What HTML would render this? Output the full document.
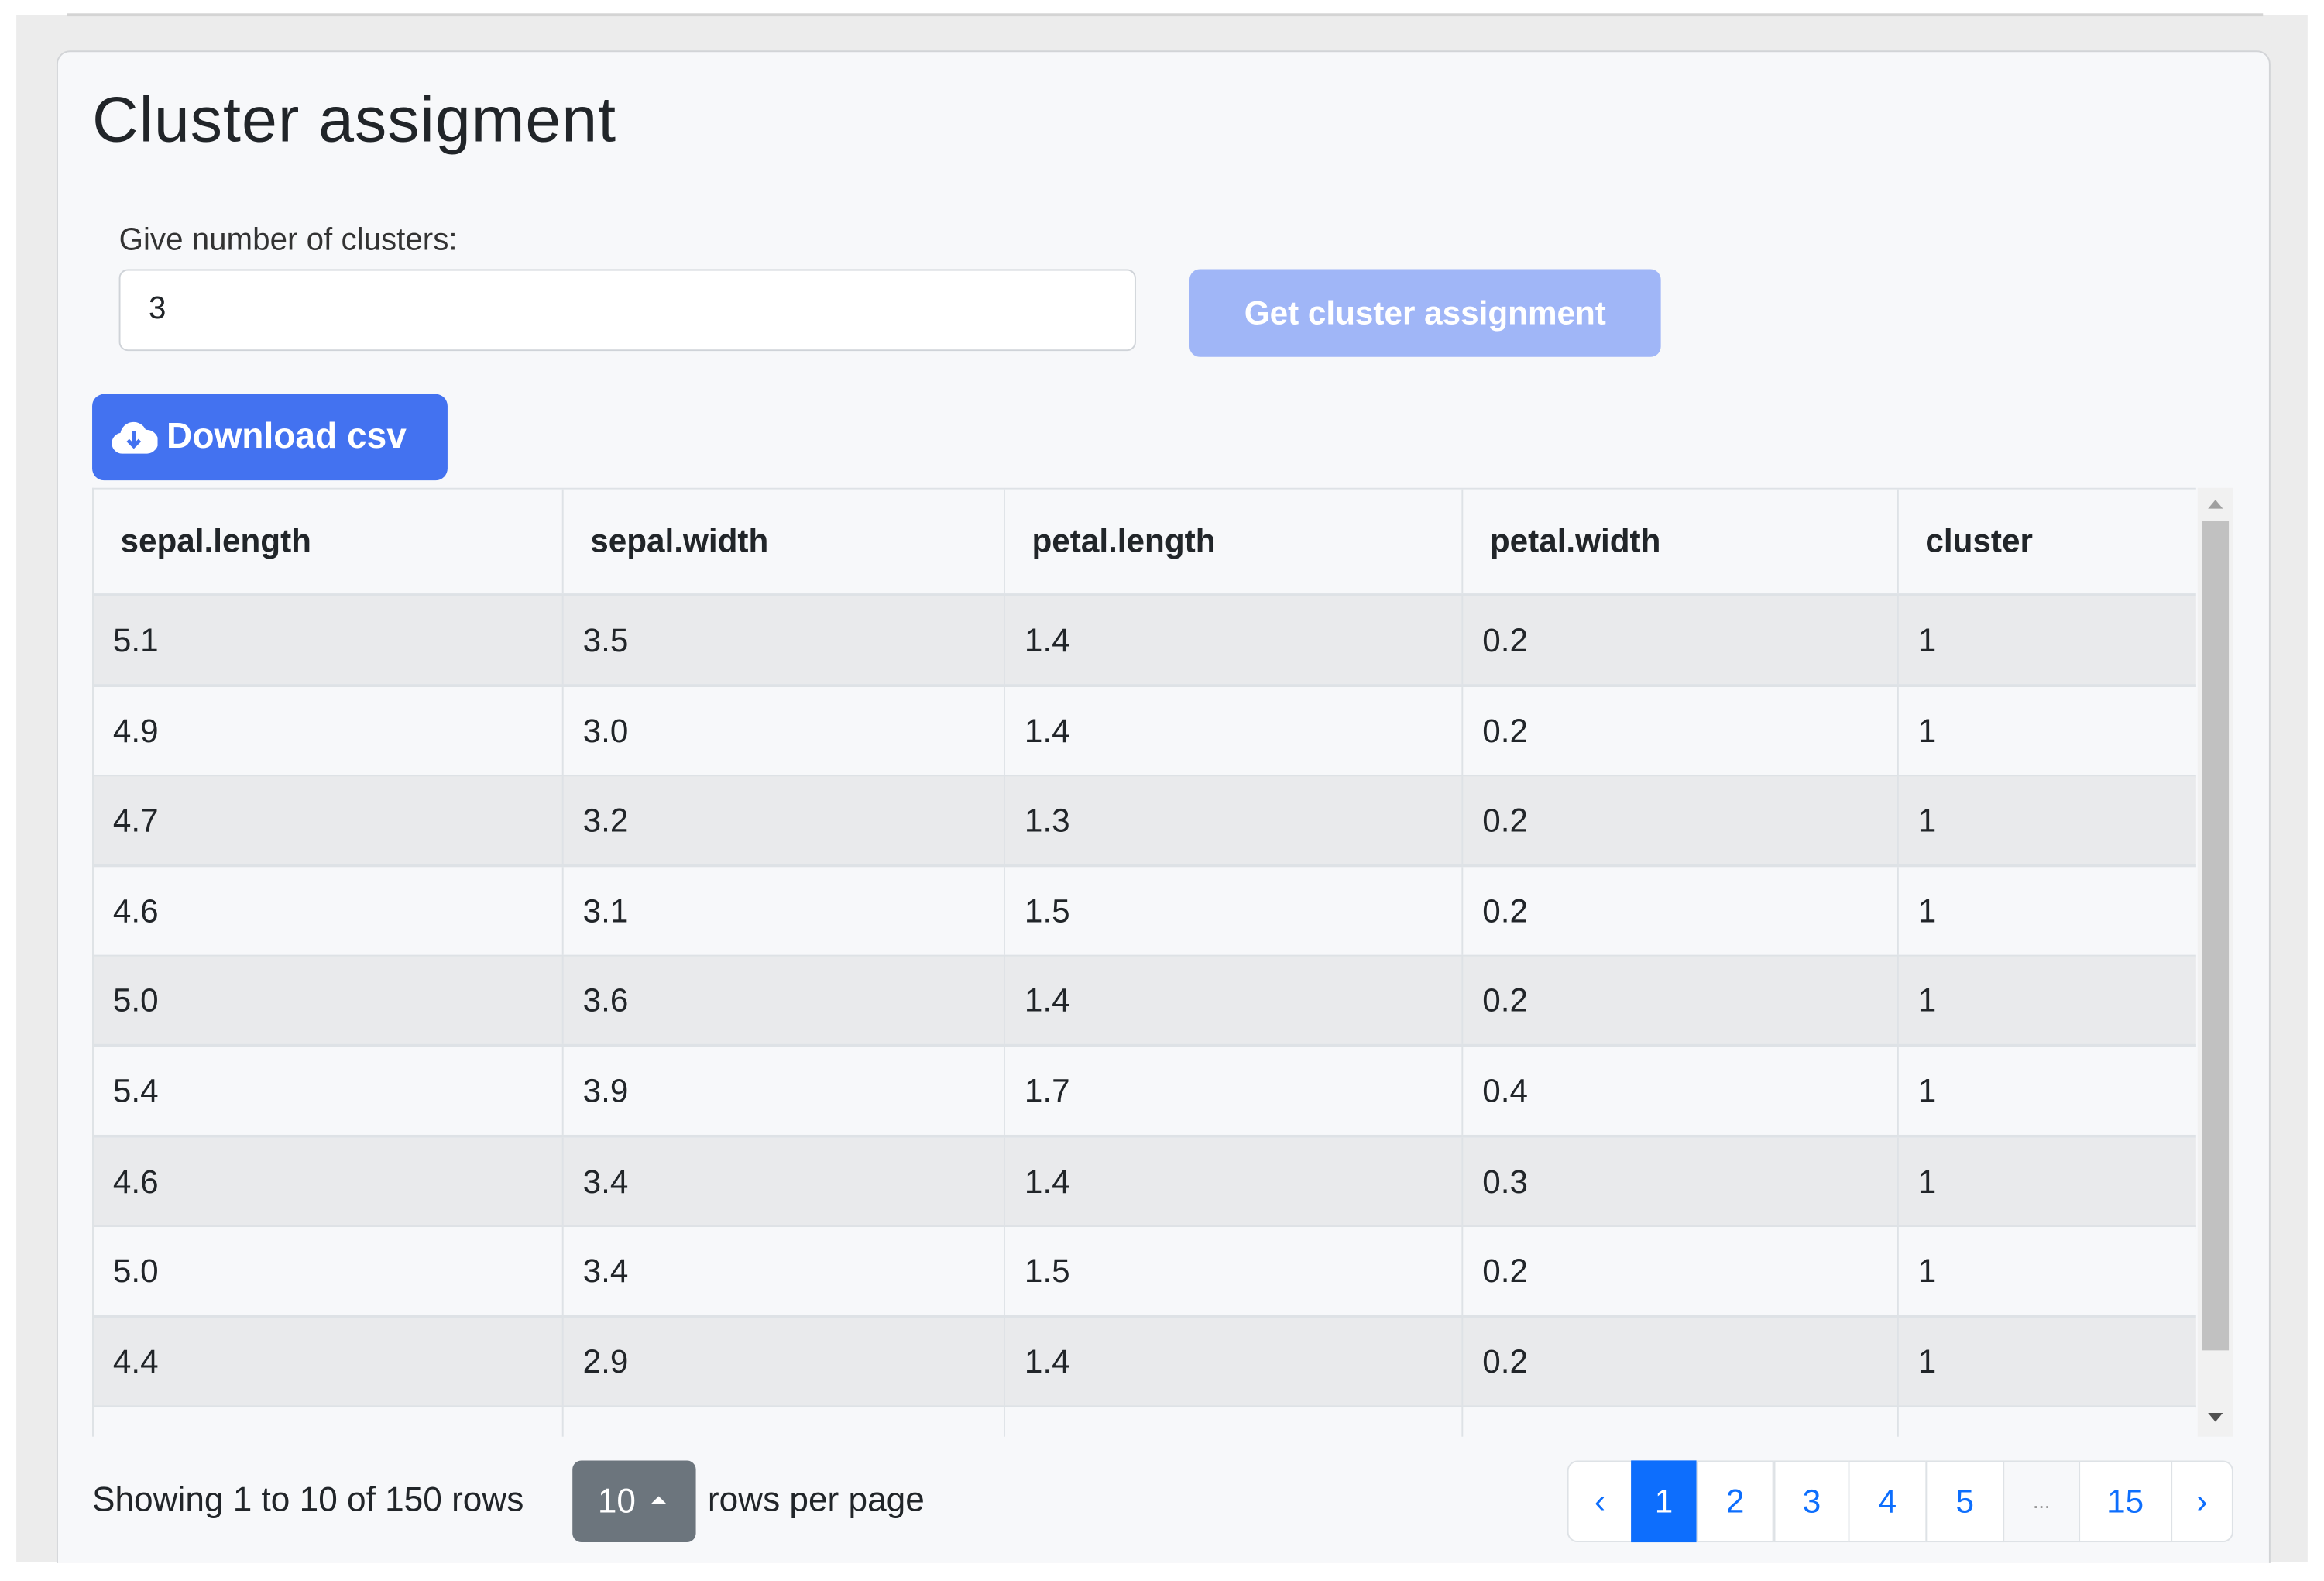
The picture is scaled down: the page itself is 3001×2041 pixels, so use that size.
<!DOCTYPE html>
<html><head><meta charset="utf-8"><style>
html,body{margin:0;padding:0;background:#fff;overflow:hidden}
body{width:3001px;height:2041px;position:relative}
#w{position:absolute;left:0;top:0;width:1563px;height:1063px;transform:scale(1.92);transform-origin:0 0;font-family:"Liberation Sans",sans-serif;color:#212529}
.a{position:absolute}
.bg{left:11px;top:10px;width:1541px;height:1040px;background:#ececec}
.tl{left:45px;top:9px;width:1477px;height:2px;background:#d4d4d4}
.card{left:38px;top:34px;width:1489px;height:1040px;background:#f7f8fa;border:1px solid #d2d4d7;border-radius:9px;box-sizing:border-box}
h1{position:absolute;left:62px;top:57px;margin:0;font-size:43px;font-weight:400;letter-spacing:0.5px}
.lbl{left:80px;top:150px;font-size:21px;color:#333}
.inp{left:80px;top:181px;width:684px;height:55px;background:#fff;border:1px solid #cfd3d8;border-radius:6px;box-sizing:border-box;font-size:21px;padding:14px 0 0 19px}
.gb{left:800px;top:181px;width:317px;height:59px;background:#a0b6f7;border-radius:7px;color:#fff;font-size:22px;font-weight:bold;line-height:59px;text-align:center}
.db{left:62px;top:265px;width:239px;height:58px;background:#4372f0;border-radius:8px;color:#fff;font-size:24px;font-weight:bold;line-height:58px}
.tbl{left:62px;top:328px;width:1415px;height:638px;overflow:hidden;border-left:1px solid #dee2e6;border-top:1px solid #dee2e6;box-sizing:border-box}
.row{position:absolute;left:0;width:1415px;border-bottom:2px solid #dee2e6;box-sizing:border-box}
.c{position:absolute;top:0;height:100%;border-right:1px solid #dee2e6;box-sizing:border-box;font-size:22px}
.sb{left:1478px;top:328px;width:24px;height:638px;background:#f1f1f1}
.th{left:1481px;top:350px;width:18px;height:558px;background:#c1c1c1}
.pg{top:982px;height:55px;border:1px solid #dee2e6;box-sizing:border-box;background:#fff;color:#0d6efd;font-size:22px;text-align:center;line-height:53px}
.wb{left:0;top:1051px;width:1563px;height:20px;background:#fff}
</style></head><body><div id="w">
<div class="a bg"></div><div class="a tl"></div>
<div class="a card"></div>
<h1>Cluster assigment</h1>
<div class="a lbl">Give number of clusters:</div>
<div class="a inp">3</div>
<div class="a gb">Get cluster assignment</div>
<div class="a db"><svg style="position:absolute;left:12px;top:17px" width="32" height="24" viewBox="0 0 32 24"><path d="M8 23a7 7 0 0 1-1-13.9A9 9 0 0 1 24 7a7 7 0 0 1 1 16z" fill="#fff"/><path d="M16 8v10M12 14l4 4 4-4" stroke="#4372f0" stroke-width="2.5" fill="none"/></svg><span style="position:absolute;left:50px">Download csv</span></div>
<div class="a tbl" id="t"></div>
<div class="a sb"></div>
<div class="a" style="left:1485px;top:336px;width:0;height:0;border:5px solid transparent;border-bottom:6px solid #a0a0a0;border-top:0"></div>
<div class="a th"></div>
<div class="a" style="left:1485px;top:950px;width:0;height:0;border:5px solid transparent;border-top:6px solid #505050;border-bottom:0"></div>
<div class="a" style="left:62px;top:995px;font-size:23px">Showing 1 to 10 of 150 rows</div>
<div class="a" style="left:385px;top:982px;width:83px;height:55px;background:#6c757d;border-radius:6px;color:#fff;font-size:23px;line-height:55px"><span style="position:absolute;left:17px">10</span><span style="position:absolute;left:53px;top:24px;width:0;height:0;border:5px solid transparent;border-bottom:5px solid #fff;border-top:0"></span></div>
<div class="a" style="left:476px;top:995px;font-size:23px">rows per page</div>
<div class="a pg" style="left:1054px;width:44px;border-radius:7px 0 0 7px">‹</div>
<div class="a pg" style="left:1097px;width:44px;background:#0d6efd;color:#fff;border-color:#0d6efd">1</div>
<div class="a pg" style="left:1141px;width:52px">2</div>
<div class="a pg" style="left:1193px;width:51px">3</div>
<div class="a pg" style="left:1243px;width:53px">4</div>
<div class="a pg" style="left:1295px;width:53px">5</div>
<div class="a pg" style="left:1347px;width:52px;background:#f7f8fa;color:#999;font-size:14px">...</div>
<div class="a pg" style="left:1398px;width:63px">15</div>
<div class="a pg" style="left:1460px;width:42px;border-radius:0 7px 7px 0">›</div>
<div class="a wb"></div>
</div>
<script>
var cols=[0,316,613,921,1214,1415];
var hd=["sepal.length","sepal.width","petal.length","petal.width","cluster"];
var d=[["5.1","3.5","1.4","0.2","1"],["4.9","3.0","1.4","0.2","1"],["4.7","3.2","1.3","0.2","1"],["4.6","3.1","1.5","0.2","1"],["5.0","3.6","1.4","0.2","1"],["5.4","3.9","1.7","0.4","1"],["4.6","3.4","1.4","0.3","1"],["5.0","3.4","1.5","0.2","1"],["4.4","2.9","1.4","0.2","1"],["4.9","3.1","1.5","0.1","1"]];
var h="";
function row(top,ht,vals,bg,bold,pad){var s='<div class="row" style="top:'+top+'px;height:'+ht+'px;background:'+bg+'">';for(var i=0;i<5;i++){s+='<div class="c" style="left:'+cols[i]+'px;width:'+(cols[i+1]-cols[i])+'px;line-height:'+(ht-2)+'px;padding-left:'+pad+'px;'+(bold?'font-weight:bold;':'')+'">'+vals[i]+'</div>';}return s+'</div>';}
h+=row(0,72,hd,"#f7f8fa",true,18);
for(var r=0;r<10;r++){h+=row(72+r*60.6,61,d[r],r%2==0?"#e9eaec":"#f7f8fa",false,13);}
document.getElementById("t").innerHTML=h;
</script>
</body></html>
